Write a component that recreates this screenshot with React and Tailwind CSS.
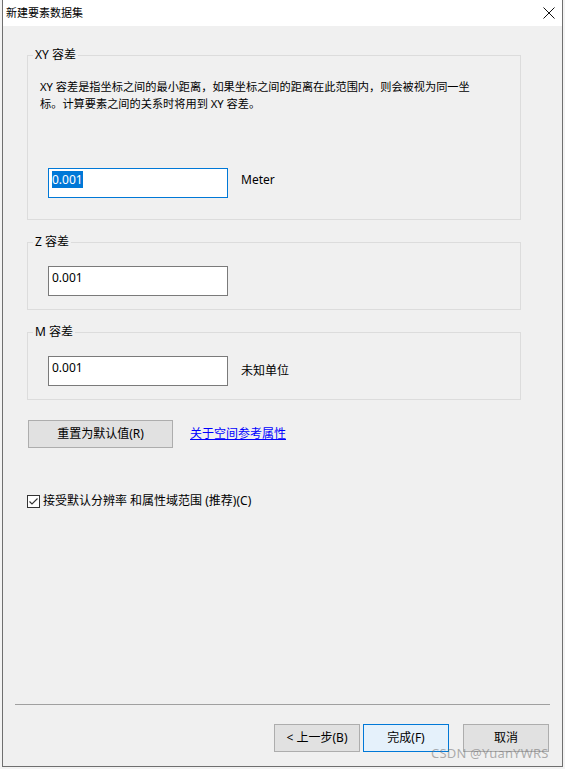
const font = { fontFamily: '"Noto Sans", "Noto Sans CJK SC", sans-serif' };

const TextBox = ({ value, selected = false }) => (
  <div
    className={`w-[180px] h-[30px] bg-white border pl-[3px] pt-[3px] text-[12px] leading-[16px] ${
      selected ? "border-[#0078d7]" : "border-[#7a7a7a]"
    }`}
  >
    {selected ? (
      <span className="bg-[#0078d7] text-white">{value}</span>
    ) : (
      <span className="text-black">{value}</span>
    )}
  </div>
);

const Group = ({ label, className = "", children }) => (
  <fieldset className={`ml-[24px] w-[494px] border border-[#dcdcdc] ${className}`}>
    <legend className="ml-[5px] px-[2px] text-[12px] leading-[14px] text-black">{label}</legend>
    {children}
  </fieldset>
);

const App = () => {
  return (
    <div className="relative w-[565px] h-[769px] bg-[#f3f3f3] pl-[2px]" style={font}>
      <div className="w-[561px] h-[767px] bg-[#f0f0f0] border-x border-b border-[#6f6f6f] flex flex-col">
        {/* Title bar */}
        <div className="h-[26px] bg-white flex items-center justify-between pl-[3px] pr-[7px] shrink-0">
          <span className="text-[11px] text-black">新建要素数据集</span>
          <svg width="12" height="12" viewBox="0 0 12 12">
            <path d="M0.5 0.5 L11.5 11.5 M11.5 0.5 L0.5 11.5" stroke="#111" strokeWidth="1" fill="none" />
          </svg>
        </div>

        {/* XY tolerance */}
        <Group label="XY 容差" className="mt-[22px] h-[172px]">
          <p className="pl-[12px] pt-[16px] text-[11.2px] leading-[17px] text-black whitespace-nowrap">
            XY 容差是指坐标之间的最小距离，如果坐标之间的距离在此范围内，则会被视为同一坐
            <br />
            标。计算要素之间的关系时将用到 XY 容差。
          </p>
          <div className="flex items-center gap-[13px] pl-[20px] mt-[56px]">
            <TextBox value="0.001" selected />
            <span className="text-[12px] text-black -mt-[6px]">Meter</span>
          </div>
        </Group>

        {/* Z tolerance */}
        <Group label="Z 容差" className="mt-[15px] h-[75px]">
          <div className="pl-[20px] mt-[17px]">
            <TextBox value="0.001" />
          </div>
        </Group>

        {/* M tolerance */}
        <Group label="M 容差" className="mt-[15px] h-[75px]">
          <div className="flex items-center gap-[13px] pl-[20px] mt-[17px]">
            <TextBox value="0.001" />
            <span className="text-[12px] text-black">未知单位</span>
          </div>
        </Group>

        {/* Reset + link */}
        <div className="flex items-center mt-[20px] ml-[25px]">
          <button className="w-[145px] h-[28px] bg-[#e1e1e1] border border-[#adadad] text-[12px] text-black">
            重置为默认值(R)
          </button>
          <a className="ml-[17px] text-[12px] text-[#0000ff] underline">关于空间参考属性</a>
        </div>

        {/* Checkbox */}
        <label className="flex items-center mt-[44px] ml-[24px]">
          <span className="w-[13px] h-[13px] bg-white border border-[#333] flex items-center justify-center">
            <svg width="11" height="11" viewBox="0 0 11 11">
              <path d="M1.5 5.5 L4 8 L9.5 2.5" stroke="#333" strokeWidth="1.1" fill="none" />
            </svg>
          </span>
          <span className="ml-[3px] text-[12px] text-black">接受默认分辨率 和属性域范围 (推荐)(C)</span>
        </label>

        <div className="flex-1" />

        {/* Separator */}
        <div className="mx-[12px] h-px bg-[#a0a0a0]" />

        {/* Footer buttons */}
        <div className="flex justify-end pr-[13px] mt-[19px] mb-[14px]">
          <button className="w-[86px] h-[28px] bg-[#e1e1e1] border border-[#adadad] text-[12px] text-black">
            &lt; 上一步(B)
          </button>
          <button className="ml-[3px] w-[86px] h-[28px] bg-[#e5f1fb] border border-[#0078d7] text-[12px] text-black">
            完成(F)
          </button>
          <button className="ml-[14px] w-[86px] h-[28px] bg-[#e1e1e1] border border-[#adadad] text-[12px] text-black">
            取消
          </button>
        </div>
      </div>

      {/* Watermark */}
      <span className="absolute left-[431px] top-[744px] text-[13px] tracking-[0.2px] text-[rgba(110,110,110,0.55)] whitespace-nowrap">
        CSDN @YuanYWRS
      </span>
    </div>
  );
};

export default App;
